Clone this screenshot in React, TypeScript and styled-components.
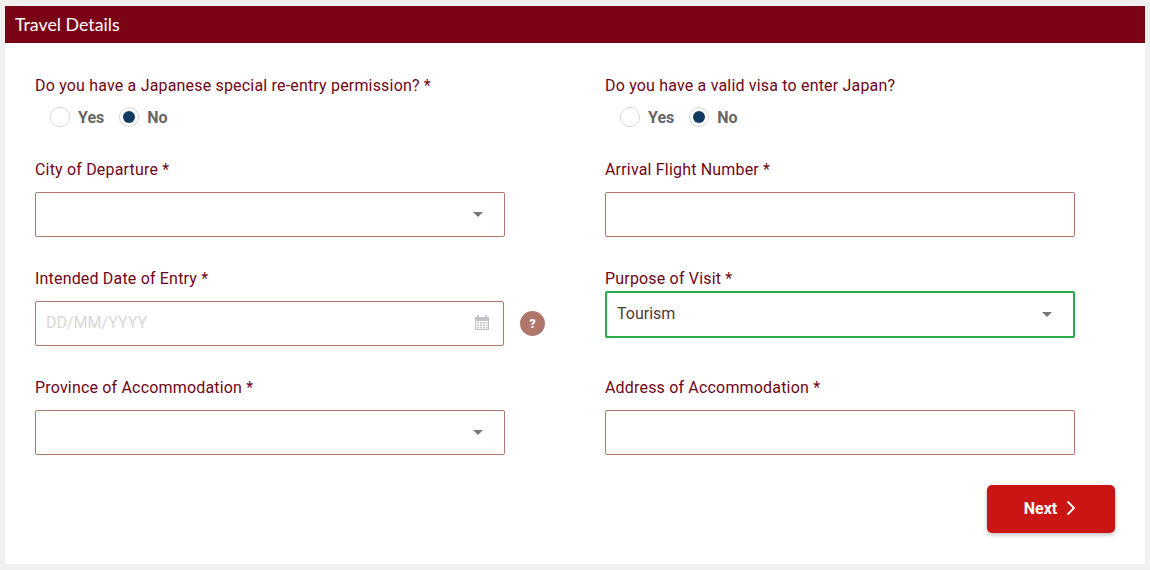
import styled, { createGlobalStyle } from "styled-components";

const GlobalStyle = createGlobalStyle`
  html, body {
    margin: 0;
    padding: 0;
    background: #f0f0f0;
  }
  * {
    box-sizing: border-box;
  }
`;

const Page = styled.div`
  width: 1150px;
  height: 570px;
  padding: 6px 5px;
  font-family: Roboto, "Liberation Sans", sans-serif;
  overflow: hidden;
`;

const Card = styled.section`
  background: #fff;
  height: 558px;
`;

const Header = styled.h2`
  margin: 0;
  height: 37px;
  padding: 0 10px;
  background: #7a0316;
  color: #fff;
  font-family: Lato, "Open Sans", sans-serif;
  font-size: 17.8px;
  font-weight: 400;
  line-height: 36px;
`;

const Form = styled.form`
  padding: 33px 30px 0;
  display: grid;
  grid-template-columns: 470px 470px;
  grid-template-rows: 84px 109px 109px 107px;
  column-gap: 100px;
`;

const Field = styled.div`
  display: flex;
  flex-direction: column;
`;

const Label = styled.label<{ $gap: number }>`
  color: #700518;
  font-size: 16px;
  line-height: 19px;
  letter-spacing: 0.18px;
  height: 19px;
  margin-bottom: ${(p) => p.$gap}px;
`;

const RadioRow = styled.div`
  display: flex;
  align-items: center;
  padding-left: 15px;
`;

const RadioOption = styled.span`
  display: flex;
  align-items: center;
  gap: 8px;
  margin-right: 15px;
  color: #666;
  font-size: 16px;
  font-weight: 700;
`;

const RadioCircle = styled.span<{ $on?: boolean }>`
  width: 20px;
  height: 20px;
  border-radius: 50%;
  border: 1px solid #d8d8d8;
  background: #fff;
  display: flex;
  align-items: center;
  justify-content: center;

  &::after {
    content: "";
    display: ${(p) => (p.$on ? "block" : "none")};
    width: 12px;
    height: 12px;
    border-radius: 50%;
    background: #12395f;
  }
`;

const InputRow = styled.div`
  display: flex;
  align-items: center;
`;

const Box = styled.div<{ $active?: boolean; $short?: boolean }>`
  flex: none;
  width: ${(p) => (p.$short ? "469px" : "470px")};
  height: ${(p) => (p.$active ? "47px" : "45px")};
  border: ${(p) => (p.$active ? "2px solid #2aa84a" : "1px solid #b5766b")};
  border-radius: 2px;
  background: #fff;
  display: flex;
  align-items: center;
  justify-content: space-between;
  padding: 0 21px 0 10px;
  color: #4f3a32;
  font-size: 16px;
`;

const Value = styled.span`
  margin-top: -3px;
`;

const Placeholder = styled.span`
  color: #d8d8d8;
  font-size: 16px;
  margin-top: -2px;
`;

const Caret = styled.span`
  width: 0;
  height: 0;
  border-left: 5px solid transparent;
  border-right: 5px solid transparent;
  border-top: 5px solid #777;
  margin-left: auto;
`;

const CalendarIcon = styled.svg`
  width: 16px;
  height: 17px;
  margin: -2px -8px 0 0;
  color: #c2c2c8;
`;

const HelpBadge = styled.span`
  flex: none;
  width: 25px;
  height: 25px;
  margin-left: 16px;
  border-radius: 50%;
  background: #b0766c;
  color: #fff;
  font-size: 12px;
  font-weight: 900;
  display: flex;
  align-items: center;
  justify-content: center;
`;

const Footer = styled.div`
  display: flex;
  justify-content: flex-end;
  padding: 0 30px;
`;

const NextButton = styled.button`
  width: 128px;
  height: 48px;
  border: none;
  border-radius: 5px;
  padding: 0 2px 2px 0;
  background: #cb1515;
  color: #fff;
  font-family: inherit;
  font-size: 16px;
  font-weight: 700;
  display: flex;
  align-items: center;
  justify-content: center;
  gap: 8px;
  box-shadow: 0 2px 4px rgba(0, 0, 0, 0.25);
`;

function YesNo() {
  return (
    <RadioRow>
      <RadioOption>
        <RadioCircle />
        Yes
      </RadioOption>
      <RadioOption>
        <RadioCircle $on />
        No
      </RadioOption>
    </RadioRow>
  );
}

export default function App() {
  return (
    <Page>
      <GlobalStyle />
      <Card>
        <Header>Travel Details</Header>
        <Form>
          <Field>
            <Label $gap={12}>Do you have a Japanese special re-entry permission? *</Label>
            <YesNo />
          </Field>
          <Field>
            <Label $gap={12}>Do you have a valid visa to enter Japan?</Label>
            <YesNo />
          </Field>
          <Field>
            <Label $gap={13}>City of Departure *</Label>
            <Box>
              <Caret />
            </Box>
          </Field>
          <Field>
            <Label $gap={13}>Arrival Flight Number *</Label>
            <Box />
          </Field>
          <Field>
            <Label $gap={13}>Intended Date of Entry *</Label>
            <InputRow>
              <Box $short>
                <Placeholder>DD/MM/YYYY</Placeholder>
                <CalendarIcon viewBox="0 0 16 17" aria-hidden="true">
                  <path
                    fill="currentColor"
                    d="M1 3h2V1h2v2h6V1h2v2h2v13H1V3zm1 4v8h12V7H2zm1 1h2v1.500H3V8zm3 0h2v1.500H6V8zm3 0h2v1.500H9V8zm3 0h1.500v1.500H12V8zM3 10.500h2V12H3v-1.500zm3 0h2V12H6v-1.500zm3 0h2V12H9v-1.500zm3 0h1.500V12H12v-1.500zM3 13h2v1.500H3V13zm3 0h2v1.500H6V13zm3 0h2v1.500H9V13zm3 0h1.500v1.500H12V13z"
                  />
                </CalendarIcon>
              </Box>
              <HelpBadge>?</HelpBadge>
            </InputRow>
          </Field>
          <Field>
            <Label $gap={3}>Purpose of Visit *</Label>
            <Box $active>
              <Value>Tourism</Value>
              <Caret />
            </Box>
          </Field>
          <Field>
            <Label $gap={13}>Province of Accommodation *</Label>
            <Box>
              <Caret />
            </Box>
          </Field>
          <Field>
            <Label $gap={13}>Address of Accommodation *</Label>
            <Box />
          </Field>
        </Form>
        <Footer>
          <NextButton type="button">
            Next
            <svg width="11" height="16" viewBox="0 0 11 16" aria-hidden="true">
              <path d="M2.500 1.500L9 8l-6.500 6.500" fill="none" stroke="#fff" strokeWidth="1.800" />
            </svg>
          </NextButton>
        </Footer>
      </Card>
    </Page>
  );
}
